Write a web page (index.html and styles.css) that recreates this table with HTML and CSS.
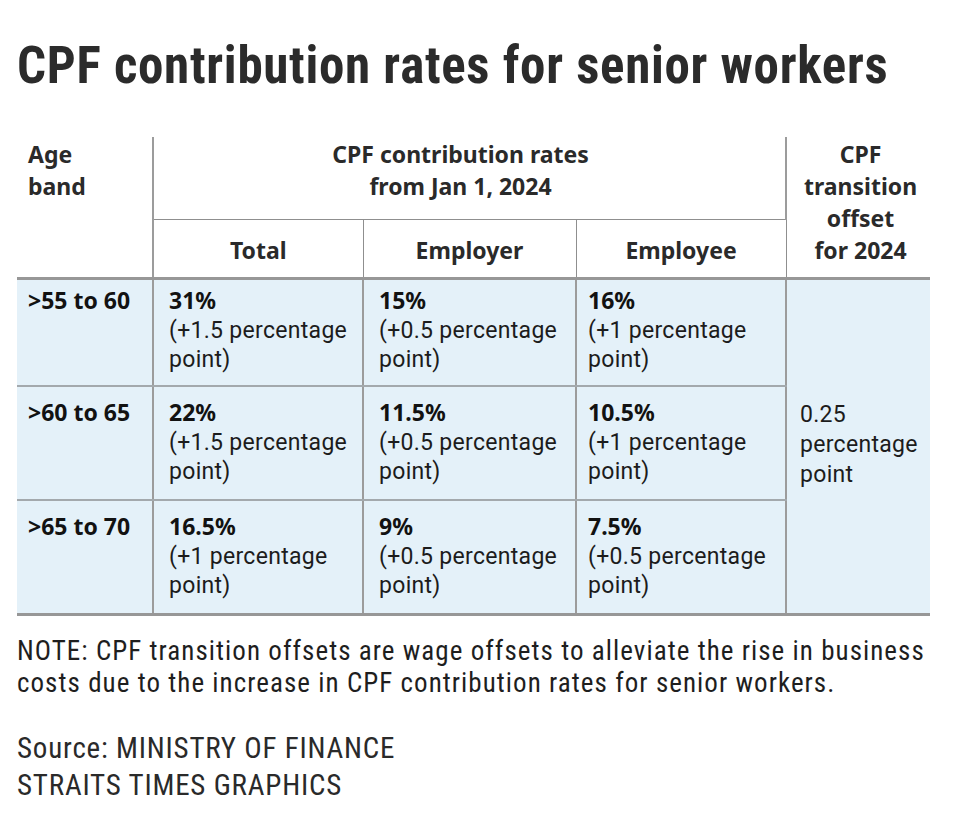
FILE: index.html
```html
<!DOCTYPE html>
<html lang="en">
<head>
<meta charset="utf-8">
<title>CPF contribution rates for senior workers</title>
<link rel="stylesheet" href="styles.css">
</head>
<body>
<main class="graphic">
  <h1 class="title">CPF contribution rates for senior workers</h1>
  <table class="rates">
    <colgroup>
      <col class="c-age">
      <col class="c-total">
      <col class="c-employer">
      <col class="c-employee">
      <col class="c-offset">
    </colgroup>
    <thead>
      <tr class="head-top">
        <th class="h-age" rowspan="2">Age<br>band</th>
        <th class="h-group" colspan="3">CPF contribution rates<br>from Jan 1, 2024</th>
        <th class="h-offset" rowspan="2">CPF<br>transition<br>offset<br>for 2024</th>
      </tr>
      <tr class="head-sub">
        <th class="h-sub">Total</th>
        <th class="h-sub">Employer</th>
        <th class="h-sub">Employee</th>
      </tr>
    </thead>
    <tbody>
      <tr class="row row-1">
        <td class="band">&gt;55 to 60</td>
        <td class="val v-total"><b>31%</b><br>(+1.5 percentage<br>point)</td>
        <td class="val v-employer"><b>15%</b><br>(+0.5 percentage<br>point)</td>
        <td class="val v-employee"><b>16%</b><br>(+1 percentage<br>point)</td>
        <td class="offset" rowspan="3">0.25<br>percentage<br>point</td>
      </tr>
      <tr class="row row-2">
        <td class="band">&gt;60 to 65</td>
        <td class="val v-total"><b>22%</b><br>(+1.5 percentage<br>point)</td>
        <td class="val v-employer"><b>11.5%</b><br>(+0.5 percentage<br>point)</td>
        <td class="val v-employee"><b>10.5%</b><br>(+1 percentage<br>point)</td>
      </tr>
      <tr class="row row-3">
        <td class="band">&gt;65 to 70</td>
        <td class="val v-total"><b>16.5%</b><br>(+1 percentage<br>point)</td>
        <td class="val v-employer"><b>9%</b><br>(+0.5 percentage<br>point)</td>
        <td class="val v-employee"><b>7.5%</b><br>(+0.5 percentage<br>point)</td>
      </tr>
    </tbody>
  </table>
  <p class="note">NOTE: CPF transition offsets are wage offsets to alleviate the rise in business<br>costs due to the increase in CPF contribution rates for senior workers.</p>
  <p class="source">Source: MINISTRY OF FINANCE<br>STRAITS TIMES GRAPHICS</p>
</main>
</body>
</html>
```

FILE: styles.css
```css
html, body {
  margin: 0;
  padding: 0;
  background: #ffffff;
}

.graphic {
  padding: 0 0 0 17px;
  color: #1e1e1e;
}

.title {
  margin: 41px 0 0 0;
  font-family: "Roboto", sans-serif;
  font-stretch: 75%;
  font-weight: 700;
  font-size: 51px;
  line-height: 50px;
  letter-spacing: 0.7px;
  color: #2b2b2b;
  white-space: nowrap;
}

.rates {
  margin-top: 46px;
  width: 913px;
  table-layout: fixed;
  border-collapse: collapse;
  font-family: "Roboto", "Liberation Sans", sans-serif;
  font-size: 23px;
  line-height: 29px;
  letter-spacing: 0.3px;
  color: #1c1c1c;
}

.c-age { width: 136px; }
.c-total { width: 210px; }
.c-employer { width: 213px; }
.c-employee { width: 210px; }
.c-offset { width: 144px; }

.rates th {
  font-family: "Noto Sans", "Roboto", sans-serif;
  font-weight: 700;
  font-size: 23px;
  letter-spacing: 0;
  color: #2a2a2a;
  line-height: 32px;
  vertical-align: top;
  padding: 1px 0 0 0;
}

.h-age {
  text-align: left;
  padding-left: 11px !important;
  border-right: 2px solid #9c9c9c;
  border-bottom: 3px solid #979797;
}

.h-group {
  height: 81px;
  text-align: center;
  padding-right: 18px !important;
  border-right: 2px solid #9c9c9c;
  border-bottom: 1px solid #8f8f8f;
}

.h-offset {
  text-align: center;
  padding-left: 4px !important;
  border-bottom: 3px solid #979797;
}

.h-sub {
  height: 54px;
  text-align: center;
  vertical-align: middle !important;
  padding: 3px 0 0 0 !important;
  border-right: 1px solid #8f8f8f;
  border-bottom: 3px solid #979797;
}

.rates td {
  background: #e4f1f9;
  vertical-align: top;
  border-right: 2px solid #9c9c9c;
  border-bottom: 2px solid #a3a9ad;
  padding: 11px 4px 13px 15px;
}

.rates td b,
.rates td.band {
  font-family: "Noto Sans", "Roboto", sans-serif;
  font-weight: 700;
  letter-spacing: 0;
  color: #121212;
}

.rates td.band {
  padding-left: 11px;
  padding-right: 2px;
}

.rates td.v-employee {
  padding-left: 11px;
}

.row-1 td {
  padding-top: 6px;
  padding-bottom: 11px;
}

.row-2 td {
  padding-bottom: 13px;
}

.row-3 td {
  border-bottom: 3px solid #979797;
  padding-bottom: 13px;
}

.rates td.offset {
  vertical-align: middle;
  padding: 0 4px 4px 13px;
  line-height: 30px;
  border-right: 0;
  border-bottom: 3px solid #979797;
}

.note {
  margin: 19px 0 0 0;
  font-family: "Roboto", sans-serif;
  font-stretch: 75%;
  font-size: 27px;
  line-height: 32px;
  letter-spacing: 1.05px;
  color: #1e1e1e;
  white-space: nowrap;
}

.source {
  margin: 31px 0 0 0;
  font-family: "Roboto", sans-serif;
  font-stretch: 75%;
  font-size: 29px;
  line-height: 37px;
  letter-spacing: 0.8px;
  color: #2a2a2a;
}
```
